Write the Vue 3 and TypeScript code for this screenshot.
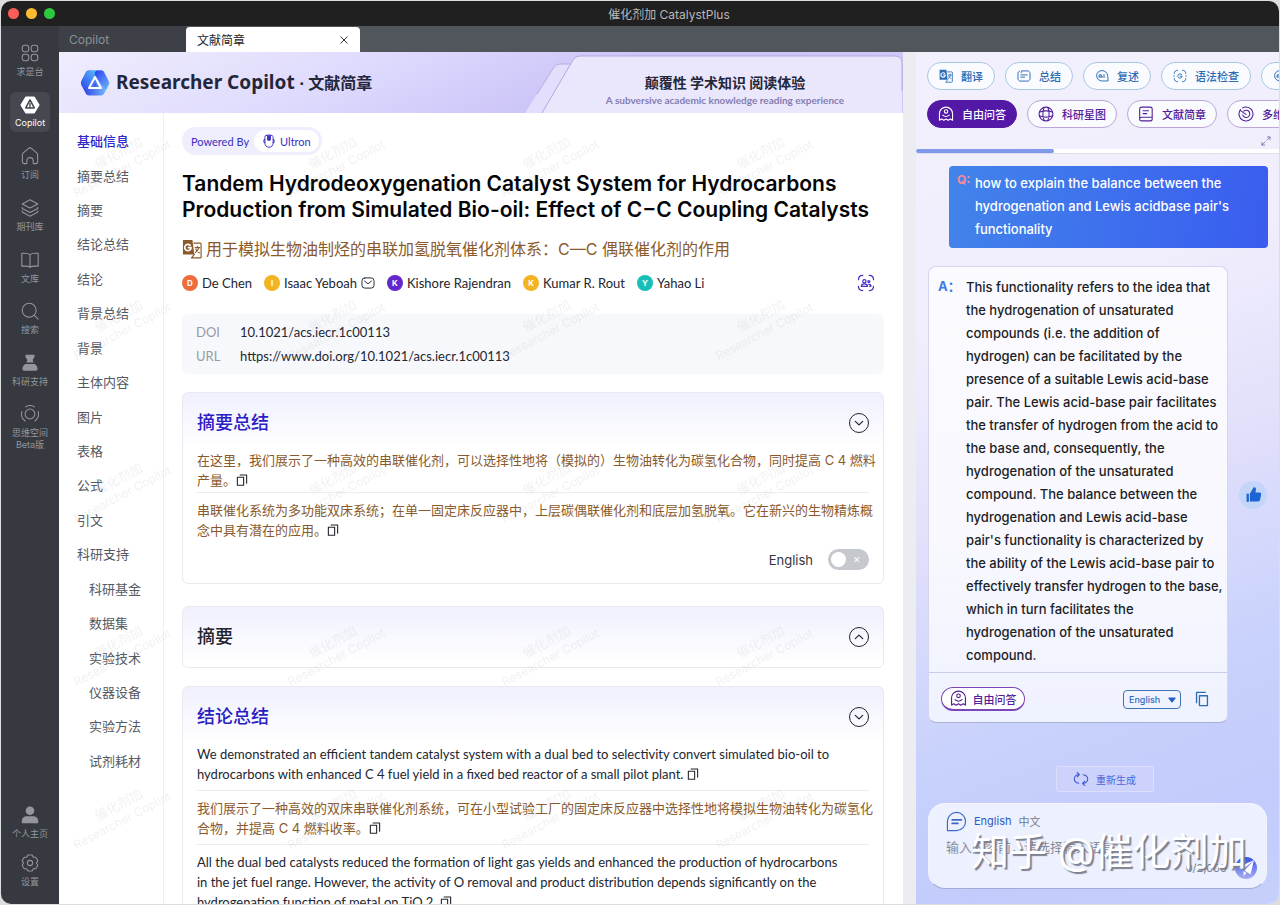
<script setup lang="ts">
import { ref } from 'vue'

interface RailItem { label: string[]; icon: string; active?: boolean }
interface NavItem { label: string; sub?: boolean; active?: boolean }
interface Author { name: string; initial: string; tone: string; mail?: boolean }
interface Chip { label: string; icon: string; active?: boolean }
interface Block { lines: string[]; lang: 'zh' | 'en' }
interface Section { title: string; open: boolean; plain?: boolean; roomy?: boolean; toggle?: boolean; blocks: Block[] }

const icons: Record<string, string> = {
  grid: '<rect x="1.500" y="1.500" width="8" height="8" rx="3"/><rect x="12.500" y="1.500" width="8" height="8" rx="3"/><rect x="1.500" y="12.500" width="8" height="8" rx="3"/><rect x="12.500" y="12.500" width="8" height="8" rx="3"/>',
  copilot: '<path d="M6.600 2.600h8.800L20.500 11l-5.100 8.400H6.600L1.500 11z" fill="currentColor" stroke-width="2"/><path d="M11 5.400l4.700 8.800H6.300z" fill="none" stroke="#45484f" stroke-width="1.700"/><path d="M11 9.400v4.400" stroke="#45484f" stroke-width="1.500"/>',
  home: '<path d="M1.700 9.500c0-1 .4-1.700 1.100-2.300L8.900 2c1.200-1 3-1 4.200 0l6.100 5.200c.7.6 1.100 1.300 1.100 2.300v8.300c0 1.500-1 2.500-2.400 2.500h-1.900c-.7 0-1.200-.5-1.200-1.200v-2.600c0-2-1.600-3.500-3.800-3.500s-3.800 1.500-3.800 3.500v2.600c0 .7-.5 1.200-1.200 1.200H4.100c-1.400 0-2.400-1-2.400-2.500z"/>',
  layers: '<path d="M11 1l9.500 5-9.500 5-9.500-5z"/><path d="M1.500 10v1.500l9.500 5 9.500-5V10M1.500 14.500V16l9.500 5 9.500-5v-1.500"/>',
  book: '<path d="M11 4.500C9.500 3.200 7.500 2.800 4.500 2.800H1v15.700h4.200c2.600 0 4.500.3 5.800 1.600 1.300-1.300 3.200-1.600 5.800-1.600H21V2.800h-3.500c-3 0-5 .4-6.500 1.700zM11 4.500v15.300"/>',
  search: '<circle cx="10" cy="10" r="8.500"/><path d="M16.200 16.200l4.800 4.800"/>',
  flask: '<path d="M5.500 1h11v2.800c0 1.500-2 1.800-2 3.200v1.300c0 1 .7 1.600 1.400 2.100H6.100c.7-.5 1.400-1.100 1.400-2.100V7c0-1.400-2-1.700-2-3.200zM5.200 12.300h11.600c2.100 1.600 3.400 3.500 3.400 5.700 0 1.700-.9 2.500-2.500 2.500H4.300c-1.600 0-2.500-.8-2.500-2.500 0-2.200 1.300-4.100 3.400-5.700z" fill="currentColor" stroke="none"/>',
  mind: '<circle cx="11" cy="11" r="6"/><path d="M5.500 2.300a10.500 10.500 0 0 1 11 0M1 8a10.500 10.500 0 0 0 4 11.500M21 8a10.500 10.500 0 0 1-4 11.500"/>',
  user: '<circle cx="11" cy="5.800" r="5.300" fill="currentColor" stroke="none"/><path d="M1 21v-2.400c0-3.900 2.600-6.100 6.400-6.100h7.200c3.800 0 6.400 2.200 6.400 6.100V21z" fill="currentColor" stroke="none"/>',
  gear: '<path d="M8.400 1.300h5.200L15 4l3-.1 2.600 4.300L18.900 11l1.700 2.800-2.600 4.300-3-.1-1.400 2.700H8.400L7 18l-3 .1-2.600-4.300L3.100 11 1.400 8.200 4 3.900 7 4z"/><circle cx="11" cy="11" r="3.200"/>',
  translate: '<path d="M1 1h10.500L13.500 17H1z" fill="currentColor" stroke="none"/><path d="M13 4.500h7c.6 0 1 .4 1 1v14.300c0 .6-.4 1-1 1h-9.500l3-3.800" stroke-width="1.300"/><path d="M9 6.900A3.500 3.500 0 1 0 10 9.500H7" stroke="#fff" stroke-width="1.800"/><path d="M14.500 9.500h5M17 8v1.500M18.500 9.500c-.6 2.500-2 4.300-4 5.500M15.300 11.200c.8 1.800 2 3 3.800 4" stroke-width="1.200"/>',
  summary: '<path d="M8 3h8.500c2.200 0 4 1.700 4 4v8c0 2.200-1.800 4-4 4h-11c-2.300 0-4-1.800-4-4V7c0-1.800 1-3.300 2.700-3.800M7.500 3.200l-1 2.500M6 9.300h10M6 12.800h6"/>',
  retell: '<path d="M20 18.800h-8.500c-5 0-9-3.300-9-8.100S6.200 2.500 11 2.500s9 3.500 9 8.200z"/><path d="M6.500 12.500V9.200h3.500v3.300M6.500 12.500h9M13 9.500h2"/>',
  grammar: '<path d="M7 2C3.800 2 2 3.800 2 7M15 2c3.200 0 5 1.800 5 5M7 20c-3.200 0-5-1.800-5-5M15 20c3.200 0 5-1.800 5-5M1.500 10.500v1M20.500 10.500v1"/><path d="M13.600 8.700a3.400 3.400 0 1 0 .8 2.600h-2.900"/>',
  ghost: '<path d="M2 19.500V10.500a9 9 0 0 1 18 0v9l-3-1.700-3 1.900-3-1.900-3 1.900-3-1.900z"/><circle cx="11" cy="7.500" r="2.300"/><path d="M6.500 12.500c2.500 2.400 6.500 2.400 9 0"/>',
  globe: '<circle cx="11" cy="11" r="9.500"/><path d="M8.500 1.800C6.500 7 6.500 15 8.500 20.200M13.500 1.800c2 5.200 2 13.200 0 18.400M1.800 8.500c5.200-2 13.200-2 18.400 0M1.800 13.500c5.200 2 13.200 2 18.400 0"/>',
  doc: '<path d="M5 1.500h12c1.300 0 2.500 1 2.500 2.300v14.400c0 1.300-1.200 2.300-2.500 2.300H5c-1.600 0-2.700-1-2.700-2.400V4C2.300 2.500 3.400 1.500 5 1.500zM2.500 17c.5-1 1.400-1.500 2.500-1.500h14.300M7 6.500h7.500M7 10.500h5"/>',
  radar: '<path d="M3.500 5A9.600 9.600 0 1 0 11 1.400c-1.800 0-3.300.4-4.700 1.200"/><path d="M3 6l8 5.500M6.500 12.500A5 5 0 1 0 8 7"/>',
  people: '<path d="M7 1.800C3.500 1.800 1.800 3.500 1.800 7M15 1.800c3.500 0 5.200 1.700 5.200 5.200M7 20.200c-3.500 0-5.200-1.700-5.200-5.200M15 20.200c3.500 0 5.200-1.700 5.200-5.200"/><circle cx="9" cy="8.800" r="2"/><path d="M5.300 15.200c0-4 7.400-4 7.400 0z"/><circle cx="14.500" cy="9.300" r="1.300"/><path d="M14.500 12.800c1.600 0 2.500.8 2.500 2.300h-1.500"/>',
  bot: '<path d="M6 2.500c3-1.300 7-1.300 10 0 1.200.6 1.500 1.500 1.500 3V14c0 4-2.500 6.800-6.500 6.800S4.500 18 4.500 14V5.500c0-1.500.3-2.400 1.500-3zM4.500 9H3v4.500h1.500M17.500 9H19v4.500h-1.500"/><path d="M8 2h6v6.500c0 1.300-1.200 2-3 2s-3-.7-3-2z" fill="currentColor" stroke="none"/>',
  mail: '<rect x="1.500" y="3" width="19" height="16" rx="4.500"/><path d="M5.500 8l5.500 4.300L16.500 8"/>',
  copy: '<path d="M2.500 6h11.500v14.500H2.500zM7.500 1.800h12v15"/>',
  copy2: '<path d="M7.500 6.500h11v13.500h-11zM3.500 16V2h12"/>',
  expand: '<path d="M13 9l6.500-6.500M14 2h6v6M9 13l-6.500 6.500M2 14v6h6"/>',
  refresh: '<path d="M8 16.800C4.200 16.300 1.800 14 1.800 11c0-3.400 2.700-6 6.300-6M5.800 2l3 3-3 3M14 5.200c3.800.5 6.200 2.800 6.200 5.800 0 3.400-2.700 6-6.300 6M16.200 20l-3-3 3-3"/>',
  thumb: '<path d="M2 10h3v10.500H2z" fill="currentColor" stroke="none"/><path d="M6.300 20V10l4.500-7.800c1.600-1.400 3.700-.3 3.400 1.900L13.500 8.500h5c1.700 0 2.600 1.100 2.400 2.600l-1.300 6.500c-.3 1.600-1.200 2.400-2.800 2.400z" fill="currentColor" stroke="none"/>',
  chat: '<path d="M1.500 20.500V11A9.500 9.500 0 1 1 11 20.500z"/><path d="M6.500 9.300h9.500M6.500 13h6" stroke-width="1.800"/>',
  down: '<path d="M6.500 9l4.500 4.300L15.500 9"/>',
  up: '<path d="M6.500 13l4.500-4.300 4.500 4.300"/>',
}

const rail: RailItem[] = [
  { label: ['求是台'], icon: 'grid' },
  { label: ['Copilot'], icon: 'copilot', active: true },
  { label: ['订阅'], icon: 'home' },
  { label: ['期刊库'], icon: 'layers' },
  { label: ['文库'], icon: 'book' },
  { label: ['搜索'], icon: 'search' },
  { label: ['科研支持'], icon: 'flask' },
  { label: ['思维空间', 'Beta版'], icon: 'mind' },
]
const railBottom: RailItem[] = [
  { label: ['个人主页'], icon: 'user' },
  { label: ['设置'], icon: 'gear' },
]
const nav: NavItem[] = [
  { label: '基础信息', active: true }, { label: '摘要总结' }, { label: '摘要' }, { label: '结论总结' },
  { label: '结论' }, { label: '背景总结' }, { label: '背景' }, { label: '主体内容' }, { label: '图片' },
  { label: '表格' }, { label: '公式' }, { label: '引文' }, { label: '科研支持' },
  { label: '科研基金', sub: true }, { label: '数据集', sub: true }, { label: '实验技术', sub: true },
  { label: '仪器设备', sub: true }, { label: '实验方法', sub: true }, { label: '试剂耗材', sub: true },
]
const authors: Author[] = [
  { name: 'De Chen', initial: 'D', tone: 'orange' },
  { name: 'Isaac Yeboah', initial: 'I', tone: 'amber', mail: true },
  { name: 'Kishore Rajendran', initial: 'K', tone: 'violet' },
  { name: 'Kumar R. Rout', initial: 'K', tone: 'amber' },
  { name: 'Yahao Li', initial: 'Y', tone: 'teal' },
]
const sections = ref<Section[]>([
  {
    title: '摘要总结', open: true, toggle: true,
    blocks: [
      { lang: 'zh', lines: ['在这里，我们展示了一种高效的串联催化剂，可以选择性地将（模拟的）生物油转化为碳氢化合物，同时提高 C 4 燃料', '产量。'] },
      { lang: 'zh', lines: ['串联催化系统为多功能双床系统；在单一固定床反应器中，上层碳偶联催化剂和底层加氢脱氧。它在新兴的生物精炼概', '念中具有潜在的应用。'] },
    ],
  },
  { title: '摘要', open: false, plain: true, blocks: [] },
  {
    title: '结论总结', open: true, roomy: true,
    blocks: [
      { lang: 'en', lines: ['We demonstrated an efficient tandem catalyst system with a dual bed to selectivity convert simulated bio-oil to', 'hydrocarbons with enhanced C 4 fuel yield in a fixed bed reactor of a small pilot plant.'] },
      { lang: 'zh', lines: ['我们展示了一种高效的双床串联催化剂系统，可在小型试验工厂的固定床反应器中选择性地将模拟生物油转化为碳氢化', '合物，并提高 C 4 燃料收率。'] },
      { lang: 'en', lines: ['All the dual bed catalysts reduced the formation of light gas yields and enhanced the production of hydrocarbons', 'in the jet fuel range. However, the activity of O removal and product distribution depends significantly on the', 'hydrogenation function of metal on TiO 2.'] },
    ],
  },
])
const toolChips: Chip[] = [
  { label: '翻译', icon: 'translate' }, { label: '总结', icon: 'summary' }, { label: '复述', icon: 'retell' },
  { label: '语法检查', icon: 'grammar' }, { label: '润色', icon: 'retell' },
]
const modeChips: Chip[] = [
  { label: '自由问答', icon: 'ghost', active: true }, { label: '科研星图', icon: 'globe' },
  { label: '文献简章', icon: 'doc' }, { label: '多维分析', icon: 'radar' },
]
const question: string[] = ['how to explain the balance between the', 'hydrogenation and Lewis acidbase pair\'s', 'functionality']
const answer: string[] = [
  'This functionality refers to the idea that', 'the hydrogenation of unsaturated', 'compounds (i.e. the addition of',
  'hydrogen) can be facilitated by the', 'presence of a suitable Lewis acid-base', 'pair. The Lewis acid-base pair facilitates',
  'the transfer of hydrogen from the acid to', 'the base and, consequently, the', 'hydrogenation of the unsaturated',
  'compound. The balance between the', 'hydrogenation and Lewis acid-base', 'pair\'s functionality is characterized by',
  'the ability of the Lewis acid-base pair to', 'effectively transfer hydrogen to the base,', 'which in turn facilitates the',
  'hydrogenation of the unsaturated', 'compound.',
]
const english = ref(false)
const draft = ref('')
</script>

<template>
  <div class="desktop">
    <div class="window">
      <header class="titlebar">
        <span class="lights"><i class="red"></i><i class="yellow"></i><i class="green"></i></span>
        <span class="app-name">催化剂加 CatalystPlus</span>
      </header>
      <div class="frame">
        <nav class="rail" aria-label="应用">
          <div class="rail-top">
            <button v-for="r in rail" :key="r.icon" class="rail-item" :class="{ active: r.active }">
              <svg class="icon" viewBox="0 0 22 22" v-html="icons[r.icon]"></svg>
              <span v-for="l in r.label" :key="l">{{ l }}</span>
            </button>
          </div>
          <div class="rail-bottom">
            <button v-for="r in railBottom" :key="r.icon" class="rail-item">
              <svg class="icon" viewBox="0 0 22 22" v-html="icons[r.icon]"></svg>
              <span v-for="l in r.label" :key="l">{{ l }}</span>
            </button>
          </div>
        </nav>

        <div class="workspace">
          <div class="tabs" role="tablist">
            <button class="tab" role="tab" aria-selected="false">Copilot</button>
            <button class="tab current" role="tab" aria-selected="true">
              文献简章
              <svg class="close" viewBox="0 0 10 10"><path d="M1.500 1.500l7 7M8.500 1.500l-7 7" /></svg>
            </button>
          </div>

          <div class="panes">
            <main class="reader">
              <div class="banner">
                <svg class="logo" viewBox="0 0 28 26">
                  <defs>
                    <linearGradient id="lg1" x1="0" y1="0" x2="1" y2="1"><stop offset="0" stop-color="#2b3ff0" /><stop offset="1" stop-color="#6db5fa" /></linearGradient>
                    <linearGradient id="lg2" x1="1" y1="0" x2="0" y2="1"><stop offset="0" stop-color="#5cc4fb" /><stop offset="1" stop-color="#2b44ee" /></linearGradient>
                    <linearGradient id="lg3" x1="0" y1="0" x2="1" y2="0"><stop offset="0" stop-color="#2a36e6" /><stop offset="1" stop-color="#7cc8fb" /></linearGradient>
                  </defs>
                  <path d="M8 .5h12c1.500 0 2.500.6 3.200 1.900L27.500 11c.6 1.300.6 2.700 0 4l-4.300 8.600c-.7 1.300-1.700 1.900-3.200 1.900H8c-1.500 0-2.500-.6-3.200-1.900L.5 15c-.6-1.300-.6-2.700 0-4l4.300-8.600C5.500 1.100 6.500.5 8 .5z" fill="url(#lg3)" />
                  <path d="M8 .5h10L6.500 19.500C4 19.500 1.500 17.500.5 15c-.6-1.300-.6-2.700 0-4l4.300-8.600C5.500 1.100 6.500.5 8 .5z" fill="url(#lg2)" />
                  <path d="M16 .5h4c1.500 0 2.500.6 3.200 1.900L27.500 11c.6 1.300.6 2.700 0 4l-2.500 5L14.500 6C13 3.500 14 1 16 .5z" fill="url(#lg1)" />
                  <path d="M14 7l6 11H8z" fill="none" stroke="#fff" stroke-width="2" stroke-linejoin="round" />
                  <path d="M14 12.500l2 4h-4z" fill="#3d5cf2" />
                </svg>
                <h1 class="brand">Researcher Copilot <span>· 文献简章</span></h1>
                <div class="slogan">
                  <svg class="slogan-bg" viewBox="0 0 378 61">
                    <path d="M0 61L29 15q2-3 6-3h24L30 61z" fill="#e2defb" />
                    <path d="M12 42L29 15q2-3 6-3h10" fill="none" stroke="#b9b0e0" />
                    <path d="M17 61L48 8q2-4 7-4h315q7 0 7 7v50z" fill="#eae7fd" />
                    <path d="M17 61L48 8q2-4 7-4h315q7 0 7 7v28" fill="none" stroke="#b3a8dc" />
                  </svg>
                  <strong>颠覆性 学术知识 阅读体验</strong>
                  <em>A subversive academic knowledge reading experience</em>
                </div>
              </div>

              <div class="document">
                <svg class="watermark" aria-hidden="true">
                  <defs>
                    <pattern id="wm" width="214" height="163" patternUnits="userSpaceOnUse">
                      <g transform="rotate(-28 60 62)" fill="#8d90a0" fill-opacity="0.12" text-anchor="middle">
                        <text x="70" y="47" font-size="13">催化剂加</text>
                        <text x="66" y="62" font-size="12">Researcher Copilot</text>
                      </g>
                    </pattern>
                  </defs>
                  <rect width="100%" height="100%" fill="url(#wm)" />
                </svg>
                <nav class="toc" aria-label="目录">
                  <a v-for="n in nav" :key="n.label" href="#" :class="{ sub: n.sub, on: n.active }">{{ n.label }}</a>
                </nav>

                <article class="paper">
                  <div class="powered">Powered By
                    <span><svg class="icon" viewBox="0 0 22 22" v-html="icons.bot"></svg>Ultron</span>
                  </div>
                  <h2 class="paper-title">Tandem Hydrodeoxygenation Catalyst System for Hydrocarbons<br>Production from Simulated Bio-oil: Effect of C−C Coupling Catalysts</h2>
                  <p class="paper-zh"><svg class="icon" viewBox="0 0 22 22" v-html="icons.translate"></svg>用于模拟生物油制烃的串联加氢脱氧催化剂体系：C—C 偶联催化剂的作用</p>
                  <div class="authors">
                    <span v-for="a in authors" :key="a.name" class="author">
                      <i :class="a.tone">{{ a.initial }}</i>{{ a.name }}
                      <svg v-if="a.mail" class="icon" viewBox="0 0 22 22" v-html="icons.mail"></svg>
                    </span>
                    <button class="team" aria-label="作者"><svg class="icon" viewBox="0 0 22 22" v-html="icons.people"></svg></button>
                  </div>
                  <dl class="ids">
                    <dt>DOI</dt><dd>10.1021/acs.iecr.1c00113</dd>
                    <dt>URL</dt><dd>https://www.doi.org/10.1021/acs.iecr.1c00113</dd>
                  </dl>

                  <section v-for="s in sections" :key="s.title" class="card" :class="{ closed: !s.open, roomy: s.roomy }">
                    <header>
                      <h3 :class="{ plain: s.plain }">{{ s.title }}</h3>
                      <button class="fold" :aria-label="s.title" :aria-expanded="s.open" @click="s.open = !s.open">
                        <svg class="icon" viewBox="0 0 22 22" v-html="s.open ? icons.down : icons.up"></svg>
                      </button>
                    </header>
                    <template v-if="s.open">
                      <p v-for="(b, bi) in s.blocks" :key="bi" :class="b.lang">
                        <template v-for="(l, li) in b.lines" :key="li"><br v-if="li > 0">{{ l }}</template>
                        <svg class="icon" viewBox="0 0 22 22" v-html="icons.copy"></svg>
                      </p>
                      <label v-if="s.toggle" class="switch">English<input v-model="english" type="checkbox" role="switch"></label>
                    </template>
                  </section>
                </article>
              </div>
            </main>

            <aside class="assistant">
              <div class="tools">
                <div class="chips blue">
                  <button v-for="c in toolChips" :key="c.label"><svg class="icon" viewBox="0 0 22 22" v-html="icons[c.icon]"></svg>{{ c.label }}</button>
                </div>
                <div class="chips purple">
                  <button v-for="c in modeChips" :key="c.label" :class="{ active: c.active }"><svg class="icon" viewBox="0 0 22 22" v-html="icons[c.icon]"></svg>{{ c.label }}</button>
                </div>
                <button class="expand" aria-label="展开"><svg class="icon" viewBox="0 0 22 22" v-html="icons.expand"></svg></button>
                <div class="scrollbar"><i></i></div>
              </div>

              <div class="question">
                <b>Q:</b>
                <p><template v-for="(l, i) in question" :key="i"><br v-if="i > 0">{{ l }}</template></p>
              </div>

              <div class="answer-row">
                <div class="answer">
                  <div class="answer-body">
                    <b>A：</b>
                    <p><template v-for="(l, i) in answer" :key="i"><br v-if="i > 0">{{ l }}</template></p>
                  </div>
                  <footer>
                    <button class="mode"><svg class="icon" viewBox="0 0 22 22" v-html="icons.ghost"></svg>自由问答</button>
                    <span class="lang">
                      <select aria-label="语言"><option>English</option><option>中文</option></select>
                      <svg viewBox="0 0 8 6"><path d="M1 .5h6q1 0 .5 1L4.600 5.200q-.6.6-1.200 0L.5 1.500Q0 .5 1 .5z" /></svg>
                    </span>
                    <button class="copy" aria-label="复制"><svg class="icon" viewBox="0 0 22 22" v-html="icons.copy2"></svg></button>
                  </footer>
                </div>
                <button class="like" aria-label="赞"><svg class="icon" viewBox="0 0 22 22" v-html="icons.thumb"></svg></button>
              </div>

              <button class="again"><svg class="icon" viewBox="0 0 22 22" v-html="icons.refresh"></svg>重新生成</button>

              <form class="composer" @submit.prevent>
                <div class="langs">
                  <svg class="icon" viewBox="0 0 22 22" v-html="icons.chat"></svg>
                  <button type="button" class="on">English</button>
                  <button type="button">中文</button>
                </div>
                <textarea v-model="draft" aria-label="输入问题" placeholder="输入内容前，请选择输入语言"></textarea>
                <div class="send-row">
                  <span>0/2,000</span>
                  <button class="send" aria-label="发送"><svg viewBox="0 0 22 22"><path d="M19 3L3 10.500l5 2zM19 3l-9.500 10.500 6 4z" /><path d="M8.500 14v5l3-3z" /></svg></button>
                </div>
                <span class="stamp">知乎 @催化剂加</span>
              </form>
            </aside>
          </div>
        </div>
      </div>
    </div>
  </div>
</template>

<style>
html, body { margin: 0; background: #dcdedd; }
</style>

<style scoped>
* { box-sizing: border-box; }
.desktop {
  height: 100vh; padding: 1px; overflow: hidden;
  font-family: Inter, "Noto Sans CJK SC", sans-serif; font-size: 13px; color: #222631;
}
button, select, input, textarea { font: inherit; color: inherit; border: 0; background: none; padding: 0; margin: 0; }
p, h1, h2, h3, dl, dd { margin: 0; }
.icon { display: block; flex: none; width: 18px; height: 18px; fill: none; stroke: currentColor; stroke-width: 1.5; stroke-linecap: round; stroke-linejoin: round; }

.window { height: 100%; display: flex; flex-direction: column; overflow: hidden; border-radius: 10px; background: #fff; }
.titlebar { position: relative; flex: none; height: 25px; padding-left: 58px; display: flex; align-items: center; justify-content: center; background: #202020; color: #b7b7b7; font-size: 12px; }
.lights { position: absolute; left: 7px; display: flex; gap: 7px; }
.lights i { width: 11px; height: 11px; border-radius: 50%; }
.red { background: #fb5e57; }
.yellow { background: #fdbc2f; }
.green { background: #2bc840; }
.frame { flex: 1; min-height: 0; display: flex; }

.rail { flex: none; width: 58px; padding: 8px 0 10px; display: flex; flex-direction: column; justify-content: space-between; background: #36393f; color: #93969c; }
.rail-top { height: 413px; display: grid; grid-template-rows: repeat(8, minmax(0, 1fr)); justify-items: center; align-items: start; }
.rail-bottom { display: grid; justify-items: center; gap: 8px; }
.rail-item { width: 48px; padding-top: 10px; display: flex; flex-direction: column; align-items: center; font-size: 9px; line-height: 12px; }
.rail-item .icon { margin-bottom: 4px; stroke-width: 1.3; }
.rail-item.active { width: 40px; margin-top: 6px; height: 40px; padding-top: 3px; border-radius: 6px; background: #45484f; color: #fff; white-space: nowrap; }
.rail-item.active .icon { width: 20px; height: 20px; margin-bottom: 2px; }
.rail-bottom .rail-item { padding-top: 0; height: 40px; }

.workspace { flex: 1; min-width: 0; display: flex; flex-direction: column; }
.tabs { flex: none; height: 26px; display: flex; background: #51555c; }
.tab { width: 127px; padding: 0 10px; text-align: left; background: #3d4147; color: #8b8f97; font-size: 12px; }
.tab.current { width: 174px; margin-top: 1px; padding: 0 11px; display: flex; align-items: center; justify-content: space-between; border-radius: 4px 4px 0 0; background: #fff; color: #22252c; }
.close { width: 10px; height: 10px; stroke: #333; fill: none; }
.panes { flex: 1; min-height: 0; display: flex; }

.reader { flex: 1; min-width: 0; display: flex; flex-direction: column; overflow: hidden; }
.banner { flex: none; height: 61px; display: flex; align-items: center; gap: 7px; padding-left: 22px; background: linear-gradient(155deg, #efedfd 0%, #dedafd 35%, #cbc4f8 62%, #cfc9fa 100%); }
.logo { width: 28px; height: 26px; }
.brand { flex: 1; font: bold 19px/26px "Noto Sans", "Noto Sans CJK SC", sans-serif; color: #24263a; white-space: nowrap; }
.brand span { font-size: 16px; }
.slogan { position: relative; width: 378px; height: 61px; padding: 14px 0 0 22px; display: flex; flex-direction: column; align-items: center; justify-content: center; }
.slogan-bg { position: absolute; inset: 0; width: 100%; height: 100%; }
.slogan strong { position: relative; font-size: 14px; line-height: 20px; color: #24263a; }
.slogan em { position: relative; font: bold 10px/14px Lato, sans-serif; color: #857cb0; white-space: nowrap; }

.document { position: relative; flex: 1; min-height: 0; display: flex; overflow: hidden; background: #fff; }
.watermark { position: absolute; inset: 0; width: 100%; height: 100%; z-index: 1; pointer-events: none; }
.toc { flex: none; width: 104px; height: 665px; padding: 11px 0 0 18px; display: grid; grid-template-rows: repeat(19, minmax(0, 1fr)); align-items: center; align-self: flex-start; }
.toc a { color: #555962; text-decoration: none; font-size: 13px; line-height: 20px; }
.toc a.sub { padding-left: 12px; }
.toc a.on { color: #3026c8; font-weight: 500; }
.paper { flex: 1; min-width: 0; padding: 14px 19px 0 18px; border-left: 1px solid #f0f0f3; }
.powered { width: fit-content; height: 28px; padding: 0 3px 0 9px; display: flex; align-items: center; gap: 5px; border-radius: 14px; background: #eeeefd; color: #3a2fc0; font-family: Lato, sans-serif; font-size: 11px; }
.powered span { height: 22px; padding: 0 8px; display: flex; align-items: center; gap: 4px; border-radius: 11px; background: #fff; }
.powered .icon { width: 14px; height: 14px; }
.paper-title { margin-top: 16px; font-size: 21px; line-height: 26px; font-weight: 600; color: #050507; white-space: nowrap; }
.paper-zh { margin-top: 14px; display: flex; align-items: center; gap: 4px; font-size: 16px; line-height: 24px; color: #8a5a2c; white-space: nowrap; }
.paper-zh .icon { width: 20px; height: 20px; }
.authors { height: 20px; margin-top: 12px; display: flex; align-items: center; gap: 12px; font-family: Lato, sans-serif; font-size: 13px; white-space: nowrap; }
.author { display: flex; align-items: center; gap: 4px; }
.author i { width: 16px; height: 16px; border-radius: 50%; color: #fff; font: bold 8px/16px Inter, sans-serif; text-align: center; }
.author .icon { width: 14px; height: 14px; }
.orange { background: #ee6d3c; }
.amber { background: #f2b423; }
.violet { background: #6427c9; }
.teal { background: #18bfb8; }
.team { margin-left: auto; margin-right: 9px; color: #4430c4; }
.ids { margin-top: 21px; padding: 6px 14px; display: grid; grid-template-columns: 44px 1fr; font-family: Lato, sans-serif; font-size: 13px; line-height: 24px; border-radius: 6px; background: #f7f8fb; }
.ids dt { color: #989ba3; }
.card { margin-top: 18px; padding: 0 14px; border: 1px solid #e9e9f1; border-radius: 6px; background: linear-gradient(#f0f0fe, #fff 56px); }
.card.closed { margin-top: 22px; padding-bottom: 3px; }
.card header { height: 57px; padding-top: 3px; display: flex; align-items: center; justify-content: space-between; }
.card h3 { font-size: 18px; line-height: 26px; font-weight: 500; color: #2a20c4; }
.card h3.plain { color: #22252c; }
.fold { width: 20px; height: 20px; display: grid; place-items: center; border: 1px solid #22252c; border-radius: 50%; }
.card p { padding: 7px 0 2px; line-height: 20px; white-space: nowrap; border-top: 1px solid #ececf1; }
.card header + p { padding-top: 0; border-top: 0; }
.card.roomy p { padding-bottom: 6px; }
.card p .icon { display: inline-block; width: 12px; height: 12px; color: #22252c; stroke-width: 2; vertical-align: -1px; }
.zh { color: #8a5a2c; }
.en { font-family: Lato, sans-serif; font-size: 13px; }
.card .en .icon { margin-left: 4px; }
.switch { height: 41px; padding-bottom: 6px; display: flex; align-items: center; justify-content: flex-end; gap: 15px; color: #33363e; }
.switch input { appearance: none; position: relative; width: 41px; height: 21px; border-radius: 11px; background: #c5c8cc; }
.switch input::before { content: ""; position: absolute; left: 3px; top: 3px; width: 15px; height: 15px; border-radius: 50%; background: #fff; }
.switch input::after { content: "✕"; position: absolute; right: 8px; top: 0; font-size: 9px; line-height: 21px; color: #fff; }

.assistant { position: relative; flex: none; width: 376px; border-left: 13px solid #ecedf0; display: flex; flex-direction: column; overflow: hidden; background: linear-gradient(160deg, #f3f0fd 0%, #f0eefc 30%, #e2e0fb 50%, #c9d2fc 72%, #c2cbfb 88%, #c6d0fc 100%); }
.tools { position: relative; flex: none; padding: 10px 0 0 11px; border-bottom: 1px solid #dcdcec; }
.chips { display: flex; gap: 10px; margin-bottom: 10px; }
.chips.purple { margin-bottom: 8px; }
.chips button { flex: none; height: 28px; padding: 0 11px; display: flex; align-items: center; gap: 8px; border: 1px solid; border-radius: 14px; background: #f9fbff; font-size: 11px; font-weight: 500; white-space: nowrap; }
.chips.purple button { padding: 0 10px; }
.chips .icon { width: 14px; height: 14px; }
.chips.purple .icon { width: 16px; height: 16px; }
.blue button { border-color: #a9c6e6; color: #2c6cb4; }
.purple button { border-color: #bda5d6; color: #53209a; }
.purple button.active { background: #5418a6; border-color: #5418a6; color: #fff; }
.expand { display: block; margin: 0 8px 0 auto; color: #5b4fa8; }
.expand .icon { width: 10px; height: 10px; }
.scrollbar { height: 4px; margin: 3px 0 0 -11px; background: #fff; }
.scrollbar i { display: block; width: 38%; height: 4px; border-radius: 2px; background: #8199ea; }
.question { flex: none; margin: 12px 11px 0 33px; padding: 6px 8px 7px; display: flex; gap: 4px; border-radius: 4px; background: linear-gradient(100deg, #4284ea, #3a5cf0); color: #fff; }
.question b { width: 14px; line-height: 15px; font-size: 12px; color: #f08c9c; }
.question p, .answer p { font-size: 13px; font-weight: 500; line-height: 23px; white-space: nowrap; }
.answer-row { flex: none; margin: 18px 11px 0 12px; display: flex; align-items: center; gap: 11px; }
.answer { width: 300px; border: 1px solid #d3d6f0; border-bottom-color: #aab0d4; border-radius: 8px; background: linear-gradient(#fbfaff, #f8f8fe 60%, #eff2ff); }
.answer-body { padding: 9px 0 5px 9px; display: flex; }
.answer-body b { width: 28px; line-height: 20px; color: #3c7ce4; font-size: 13px; white-space: nowrap; }
.answer p { color: #1c1e26; }
.answer footer { height: 50px; padding: 3px 17px 0 12px; display: flex; align-items: center; border-top: 1px solid #c9cde8; }
.mode { width: 84px; height: 24px; display: flex; align-items: center; justify-content: center; gap: 6px; border: 1px solid #7b46b8; border-bottom-width: 2px; border-radius: 12px; background: #fff; color: #53209a; font-size: 11px; font-weight: 500; }
.mode .icon { width: 17px; height: 17px; }
.lang { position: relative; margin-left: auto; }
.lang select { appearance: none; display: block; width: 58px; height: 19px; padding-left: 5px; border: 1px solid #3c74b8; border-radius: 4px; color: #2c6cc4; font-size: 9px; font-weight: 500; }
.lang svg { position: absolute; right: 5px; top: 7px; width: 8px; height: 6px; fill: #2463c4; }
.copy { margin-left: 13px; color: #2c6cb4; }
.copy .icon { width: 16px; height: 16px; stroke-width: 1.8; }
.like { flex: none; width: 28px; height: 28px; display: grid; place-items: center; border-radius: 50%; background: #c3d5f8; color: #1c64d4; }
.like .icon { width: 17px; height: 17px; }
.again { flex: none; align-self: center; width: 98px; height: 26px; margin: 43px 0 0 14px; display: flex; align-items: center; justify-content: center; gap: 7px; border: 1px solid #dcdffc; border-radius: 3px; background: #ccd2fb; color: #4a68d8; font-size: 10px; }
.again .icon { width: 16px; height: 16px; color: #3f5ad0; }
.composer { position: relative; flex: none; height: 86px; margin: 11px 12px 0; padding: 7px 10px 0 17px; border: 1px solid #f3f4ff; border-bottom-color: #a5abd4; border-radius: 17px; background: #edf0fe; }
.langs { display: flex; align-items: center; gap: 7px; height: 20px; font-size: 11px; color: #777b86; }
.langs .icon { width: 21px; height: 21px; color: #3a68c8; stroke-width: 1.2; }
.langs .on { color: #2b5cc4; }
textarea { display: block; width: 100%; height: 24px; margin-top: 4px; resize: none; overflow: hidden; font-size: 13px; line-height: 24px; outline: none; }
textarea::placeholder { color: #888c98; opacity: 1; }
.send-row { position: absolute; right: 9px; bottom: 9px; display: flex; align-items: center; gap: 8px; font-size: 11px; color: #7c808c; }
.send { width: 22px; height: 22px; border-radius: 50%; background: linear-gradient(#3a50e6, #a9b0f2); }
.send svg { display: block; width: 22px; height: 22px; fill: #fff; }
.stamp { position: absolute; left: 42px; top: 20px; font-size: 38px; line-height: 54px; color: #fff; white-space: nowrap; text-shadow: 2px 2px 1px #7d7f90; pointer-events: none; }
</style>
